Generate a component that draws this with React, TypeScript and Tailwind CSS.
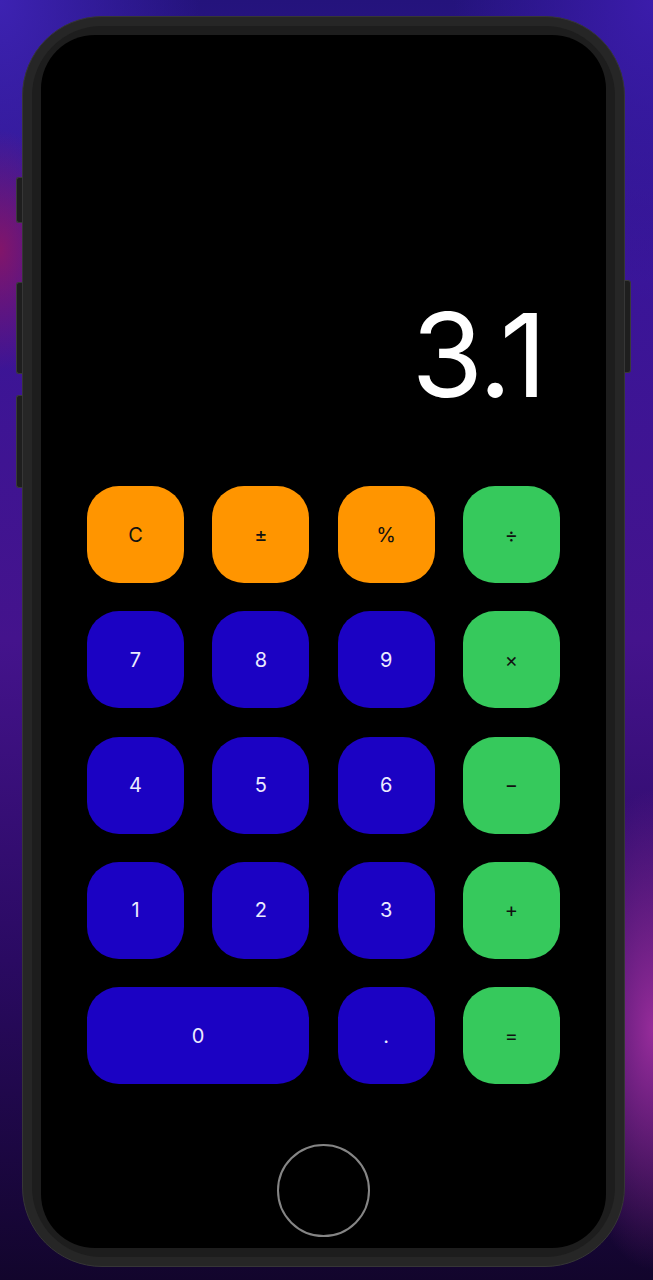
import React from "react";

type Key = { label: string; kind: "op" | "num" | "fn"; wide?: boolean };

const keys: Key[] = [
  { label: "C", kind: "fn" },
  { label: "±", kind: "fn" },
  { label: "%", kind: "fn" },
  { label: "÷", kind: "op" },
  { label: "7", kind: "num" },
  { label: "8", kind: "num" },
  { label: "9", kind: "num" },
  { label: "×", kind: "op" },
  { label: "4", kind: "num" },
  { label: "5", kind: "num" },
  { label: "6", kind: "num" },
  { label: "−", kind: "op" },
  { label: "1", kind: "num" },
  { label: "2", kind: "num" },
  { label: "3", kind: "num" },
  { label: "+", kind: "op" },
  { label: "0", kind: "num", wide: true },
  { label: ".", kind: "num" },
  { label: "=", kind: "op" },
];

function KeyButton({ k }: { k: Key }) {
  const color =
    k.kind === "fn"
      ? "bg-[#ff9500] text-[#111111]"
      : k.kind === "op"
      ? "bg-[#36c95c] text-[#111111]"
      : "bg-[#1b02c3] text-[#ecebff]";
  return (
    <button
      className={`${color} ${k.wide ? "col-span-2" : ""} h-[97px] rounded-[32px] flex items-center justify-center text-[20px] font-normal leading-none`}
    >
      {k.label}
    </button>
  );
}

export default function App() {
  return (
    <div
      className="w-[653px] h-[1280px] overflow-hidden pt-[16px] pl-[22px] bg-[radial-gradient(ellipse_70px_120px_at_0px_250px,#82156a,transparent),radial-gradient(ellipse_90px_240px_at_653px_1030px,#962c9a,transparent),radial-gradient(ellipse_200px_300px_at_0px_0px,#3d22b2,transparent),radial-gradient(ellipse_200px_300px_at_653px_0px,#3b1cab,transparent),linear-gradient(180deg,#24137c_0%,#3a1598_22%,#44138c_50%,#2a0a62_75%,#12052c_100%)]"
      style={{ fontFamily: "Inter, 'Noto Sans', sans-serif" }}
    >
      <div className="relative w-[603px] h-[1251px] rounded-[80px] bg-[#262626] border border-[#363636] p-[9px]">
        {/* side buttons */}
        <div className="absolute left-[-7px] top-[160px] w-[6px] h-[46px] rounded-l-[3px] bg-[#1e1e1e] border border-r-0 border-[#3a3a3a]" />
        <div className="absolute left-[-7px] top-[265px] w-[6px] h-[92px] rounded-l-[3px] bg-[#1e1e1e] border border-r-0 border-[#3a3a3a]" />
        <div className="absolute left-[-7px] top-[378px] w-[6px] h-[93px] rounded-l-[3px] bg-[#1e1e1e] border border-r-0 border-[#3a3a3a]" />
        <div className="absolute right-[-7px] top-[263px] w-[6px] h-[93px] rounded-r-[3px] bg-[#1e1e1e] border border-l-0 border-[#3a3a3a]" />

        <div className="w-full h-full rounded-[70px] bg-[#1d1d1d] p-[9px]">
          <div className="w-full h-full rounded-[54px] bg-black flex flex-col items-center pt-[262px]">
            <div className="w-[473px] h-[117px] text-right text-white text-[116px] font-normal leading-none tracking-[-2px] pr-[15px]">
              3.1
            </div>
            <div className="mt-[72px] w-[473px] grid grid-cols-4 gap-x-[28.3px] gap-y-[28.3px]">
              {keys.map((k) => (
                <KeyButton key={k.label} k={k} />
              ))}
            </div>
            <div className="mt-[60px] w-[93px] h-[93px] rounded-full border-2 border-[#858585]" />
          </div>
        </div>
      </div>
    </div>
  );
}
